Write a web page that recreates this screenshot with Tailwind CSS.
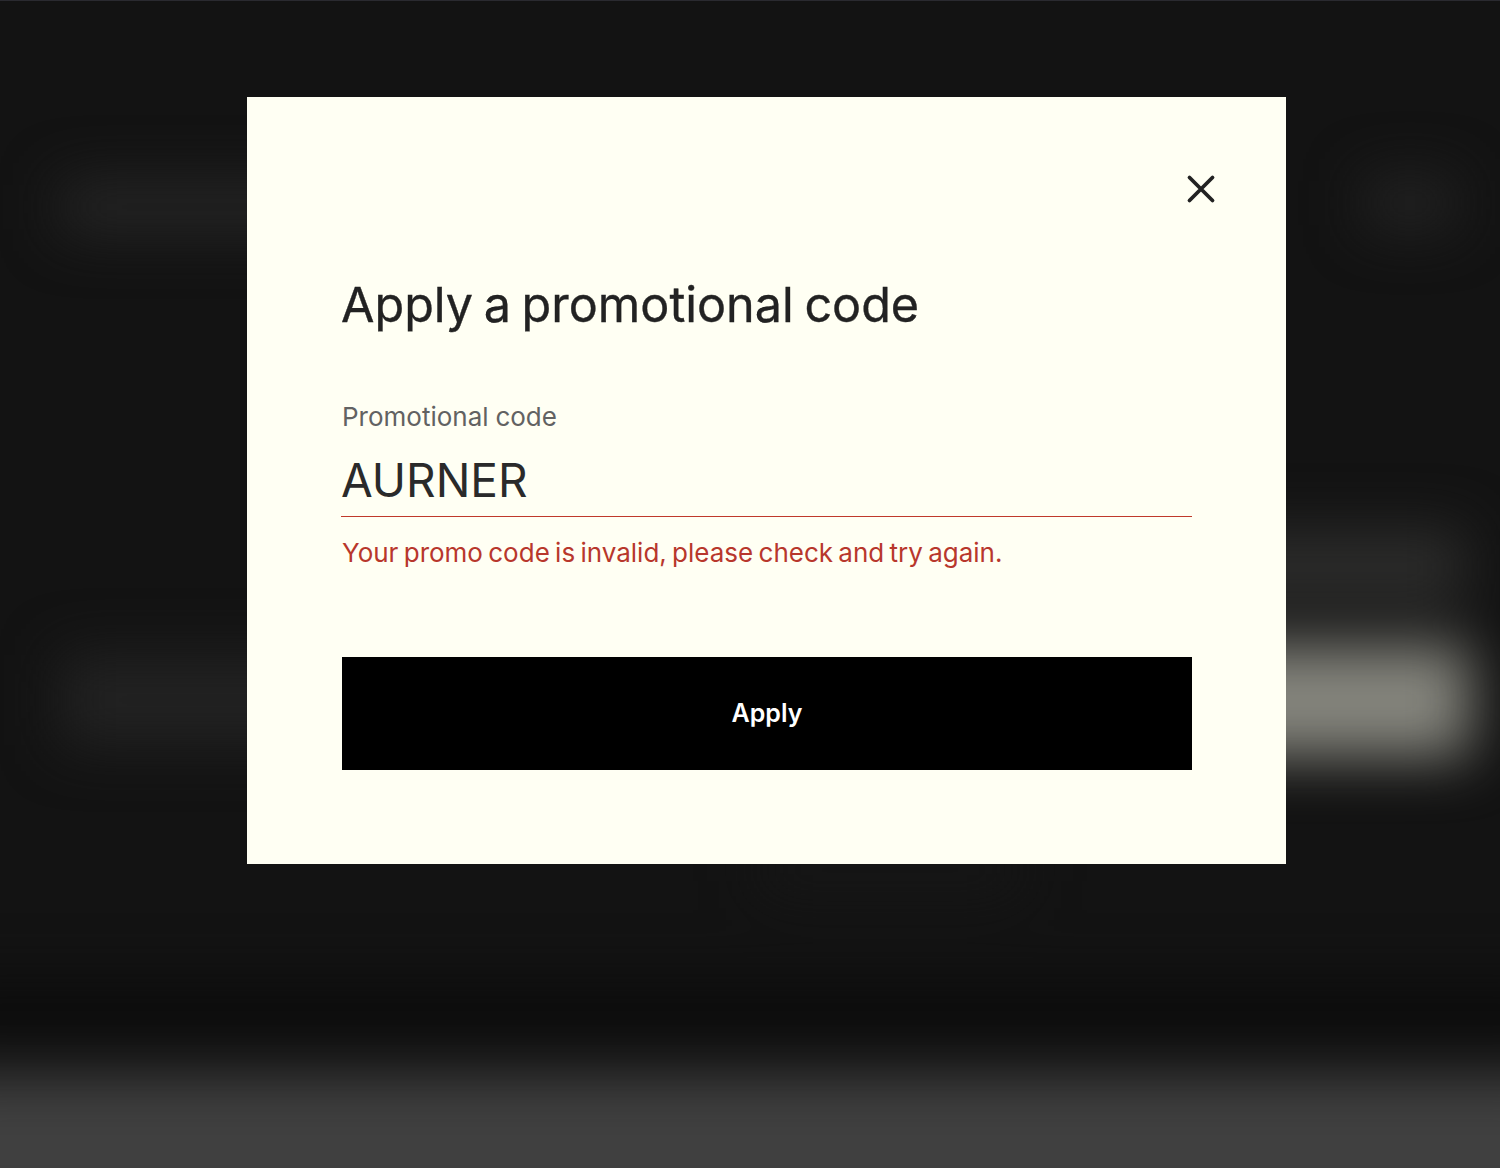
<!DOCTYPE html>
<html lang="en">
<head>
<meta charset="utf-8">
<title>Apply a promotional code</title>
<script src="https://cdn.jsdelivr.net/npm/@tailwindcss/browser@4"></script>
</head>
<body class="bg-[#131313]">
<div class="relative w-[1500px] h-[1168px] overflow-hidden bg-[#131313] font-['Inter',sans-serif]">
  <!-- blurred page behind the dialog -->
  <div class="absolute inset-0 blur-[28px]" aria-hidden="true">
    <div class="absolute left-[60px] top-[182px] w-[300px] h-[50px] bg-[#262626]"></div>
    <div class="absolute left-[1365px] top-[178px] w-[90px] h-[50px] bg-[#242424]"></div>
    <div class="absolute left-[1200px] top-[530px] w-[265px] h-[75px] bg-[#2c2c2b]"></div>
    <div class="absolute left-[1200px] top-[645px] w-[270px] h-[112px] bg-[#85857d]"></div>
    <div class="absolute left-[60px] top-[655px] w-[260px] h-[90px] bg-[#222222]"></div>
    <div class="absolute left-[760px] top-[850px] w-[260px] h-[40px] bg-[#171717]"></div>
    <div class="absolute left-[-60px] top-[980px] w-[1620px] h-[65px] bg-[#0c0c0c]"></div>
    <div class="absolute left-[-60px] top-[1075px] w-[1620px] h-[150px] bg-[#404040]"></div>
  </div>
  <div class="absolute left-0 top-0 w-full h-px bg-[#2a2a30]"></div>

  <div class="absolute left-[247px] top-[97px] w-[1039px] h-[767px] bg-[#fffff3] pl-[95px] pr-[94px] flex flex-col">
    <button class="absolute left-[939px] top-[77px] w-[30px] h-[30px] flex items-center justify-center text-[#222222]" aria-label="Close">
      <svg width="30" height="30" viewBox="0 0 30 30" fill="none" stroke="currentColor" stroke-width="3.8" stroke-linecap="round"><path d="M3.5 3.5L26.5 26.5M26.5 3.5L3.5 26.5"/></svg>
    </button>
    <h2 class="mt-[179px] -ml-px text-[48.5px] leading-[58px] font-normal [-webkit-text-stroke:0.35px_#222222] [word-spacing:-3px] text-[#222222] whitespace-nowrap">Apply a promotional code</h2>
    <label class="mt-[67px] text-[26px] leading-[32px] [word-spacing:-0.5px] text-[#626262]">Promotional code</label>
    <div class="mt-[19px] -ml-px h-[65px] border-b border-[#c0392b] text-[46px] leading-[57px] text-[#2a2a2a]">AURNER</div>
    <p class="mt-[20px] text-[26px] leading-[32px] [word-spacing:-2px] text-[#b8372c] whitespace-nowrap">Your promo code is invalid, please check and try again.</p>
    <button class="mt-[88px] h-[113px] bg-black text-white text-[25px] font-semibold flex items-center justify-center">Apply</button>
  </div>
</div>
</body>
</html>
